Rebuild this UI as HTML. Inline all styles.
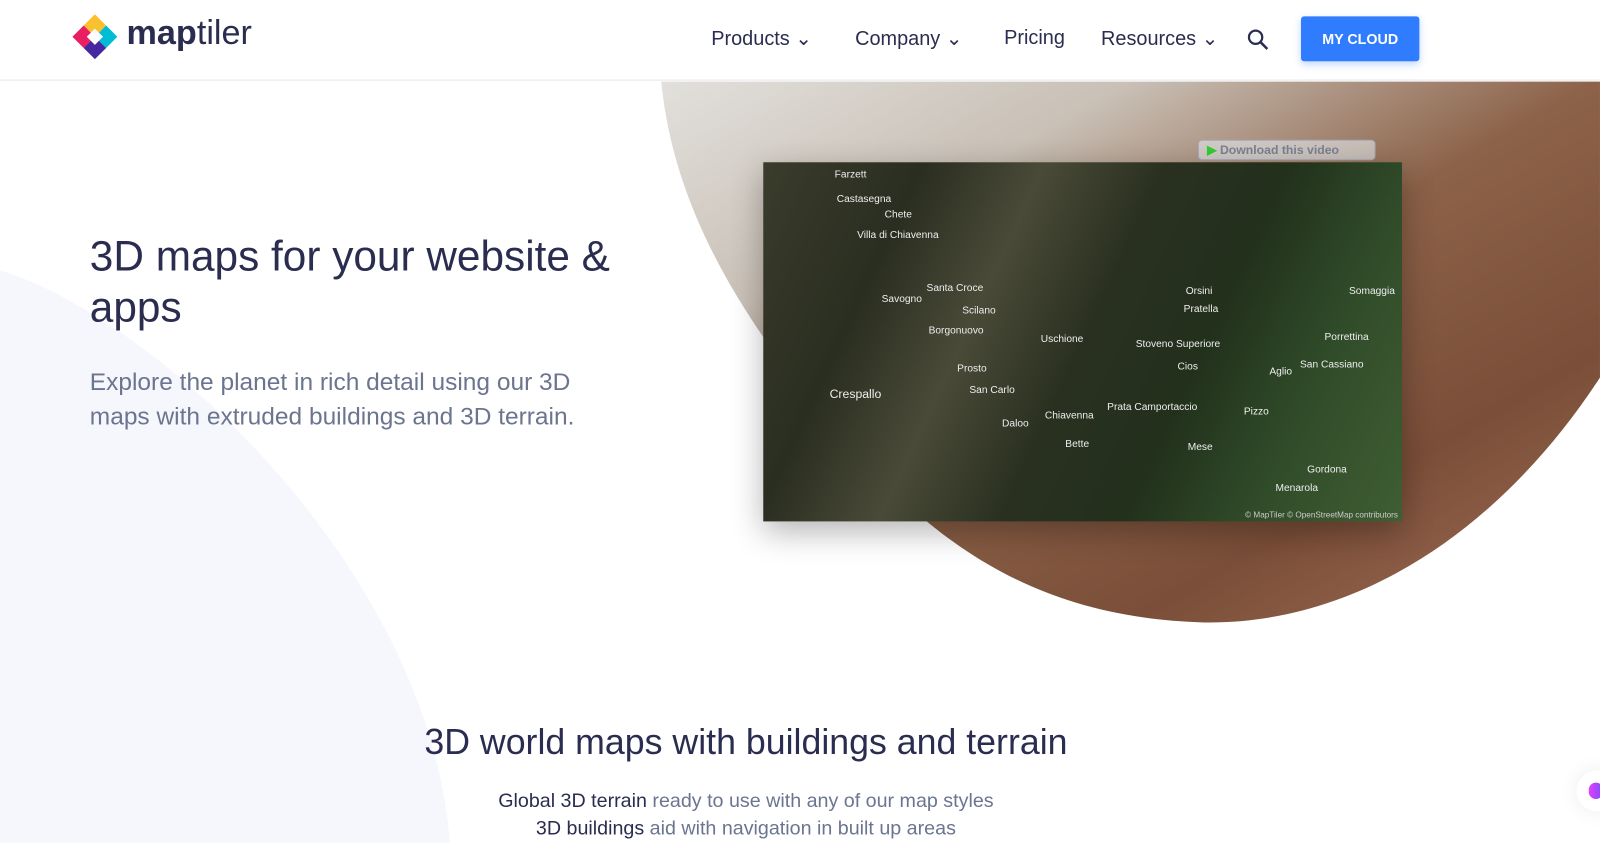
<!DOCTYPE html>
<html><head><meta charset="utf-8"><style>
body{margin:0;width:1600px;height:843px;overflow:hidden;background:#fff;font-family:"Liberation Sans",sans-serif;position:relative}
#w{position:absolute;left:0;top:0;width:1568px;height:826px;transform:scale(1.0204);transform-origin:0 0}
.hdr{position:absolute;left:0;top:0;width:1568px;height:78px;border-bottom:1px solid #e3e6ee;background:#fff;z-index:5}
.nav{position:absolute;top:26px;font-size:19.5px;color:#2a2d4f}
.btn{position:absolute;left:1275px;top:16px;width:116px;height:44px;background:#2f7cff;border-radius:3px;color:#fff;font-weight:bold;font-size:14px;line-height:44px;text-align:center;box-shadow:0 3px 8px rgba(47,124,255,.3)}
h1{position:absolute;left:88px;top:226px;margin:0;font-weight:normal;font-size:41.5px;line-height:50px;color:#2a2d4f;width:580px}
.p{position:absolute;left:88px;top:358px;font-size:24px;line-height:34px;color:#6b7590;width:520px}
h2{position:absolute;left:0;width:1462px;top:708px;margin:0;text-align:center;font-weight:normal;font-size:35px;color:#2a2d4f}
.l{position:absolute;width:1462px;text-align:center;font-size:19.3px;color:#6b7590}
.l b{color:#2a2d4f;font-weight:normal}
.card{position:absolute;left:748px;top:159px;width:626px;height:352px;background:linear-gradient(115deg,#3a3c2c 0%,#2a2e20 20%,#4a4a38 35%,#2a3020 50%,#22301c 65%,#2f4a28 80%,#3f5e34 100%);box-shadow:0 10px 30px rgba(0,0,0,.3);font-size:10px;color:#eee}
.card span{position:absolute}
</style></head><body><div id="w">
<svg width="1568" height="826" style="position:absolute;left:0;top:0">
<defs><linearGradient id="t" x1="0" y1="0" x2="1" y2="1">
<stop offset="0" stop-color="#e2e0dc"/><stop offset=".25" stop-color="#c9c0b6"/><stop offset=".5" stop-color="#8c6248"/><stop offset=".75" stop-color="#7a4e38"/><stop offset="1" stop-color="#a27058"/></linearGradient></defs>
<path d="M0 265 C150 310 430 560 442 843 L0 843 Z" fill="#f5f7fd"/>
<path d="M648 80 L1568 80 L1568 370 C1470 520 1330 612 1180 610 C1000 605 900 520 800 400 C720 300 660 200 648 80 Z" fill="url(#t)"/>
</svg>
<div class="hdr">
<svg style="position:absolute;left:71px;top:14px" width="44" height="44" viewBox="0 0 44 44">
<path d="M22 0 L33 11 L22 22 L11 11Z" fill="#fbc02d"/><path d="M11 11 L22 22 L11 33 L0 22Z" fill="#e91e63"/><path d="M33 11 L44 22 L33 33 L22 22Z" fill="#00bcd4"/><path d="M22 22 L33 33 L22 44 L11 33Z" fill="#4527a0"/>
<path d="M11 11 L22 0 L16 6Z" fill="#ff5722"/><path d="M22 22 L11 33 L18 26Z" fill="#7e22e0"/>
<path d="M22 14 L30 22 L22 30 L14 22Z" fill="#fff"/></svg>
<div style="position:absolute;left:124px;top:14px;font-size:33.5px;color:#2a2d4f"><b>map</b>tiler</div>
<div class="nav" style="left:697px">Products ⌄</div>
<div class="nav" style="left:838px">Company ⌄</div>
<div class="nav" style="left:984px">Pricing</div>
<div class="nav" style="left:1079px">Resources ⌄</div>
<svg style="position:absolute;left:1222px;top:28px" width="22" height="22"><circle cx="8.5" cy="8.5" r="6.5" stroke="#2a2d4f" stroke-width="2.2" fill="none"/><path d="M13 13 L20 20" stroke="#2a2d4f" stroke-width="2.5"/></svg>
<div class="btn">MY CLOUD</div>
</div>
<div style="position:absolute;left:1174px;top:137px;width:172px;height:18px;border:1px solid #aab;border-radius:4px;background:rgba(230,235,240,.6);font-size:12px;font-weight:bold;color:#7a8090;line-height:18px"><span style="color:#3c3;margin-left:8px">▶</span> Download this video</div>
<h1>3D maps for your website &amp; apps</h1>
<div class="p">Explore the planet in rich detail using our 3D maps with extruded buildings and 3D terrain.</div>
<div class="card">
<span style="left:70px;top:7px">Farzett</span><span style="left:72px;top:31px">Castasegna</span><span style="left:119px;top:46px">Chete</span><span style="left:92px;top:66px">Villa di Chiavenna</span>
<span style="left:160px;top:118px">Santa Croce</span><span style="left:116px;top:129px">Savogno</span><span style="left:195px;top:140px">Scilano</span><span style="left:162px;top:160px">Borgonuovo</span>
<span style="left:272px;top:168px">Uschione</span><span style="left:414px;top:121px">Orsini</span><span style="left:412px;top:139px">Pratella</span><span style="left:365px;top:173px">Stoveno Superiore</span><span style="left:406px;top:195px">Cios</span>
<span style="left:190px;top:197px">Prosto</span><span style="left:65px;top:220px;font-size:12px">Crespallo</span><span style="left:202px;top:218px">San Carlo</span><span style="left:276px;top:243px">Chiavenna</span><span style="left:337px;top:235px">Prata Camportaccio</span>
<span style="left:234px;top:251px">Daloo</span><span style="left:296px;top:271px">Bette</span><span style="left:416px;top:274px">Mese</span><span style="left:496px;top:200px">Aglio</span><span style="left:471px;top:239px">Pizzo</span>
<span style="left:526px;top:193px">San Cassiano</span><span style="left:550px;top:166px">Porrettina</span><span style="left:574px;top:121px">Somaggia</span><span style="left:533px;top:296px">Gordona</span><span style="left:502px;top:314px">Menarola</span>
<span style="right:4px;bottom:2px;font-size:8px;color:#ccc">© MapTiler © OpenStreetMap contributors</span>
</div>
<h2>3D world maps with buildings and terrain</h2>
<div class="l" style="top:775px"><b>Global 3D terrain</b> ready to use with any of our map styles</div>
<div class="l" style="top:802px"><b>3D buildings</b> aid with navigation in built up areas</div>
<div style="position:absolute;left:1545px;top:755px;width:40px;height:40px;border-radius:50%;background:#fff;box-shadow:0 0 20px rgba(0,0,0,.08)"><div style="position:absolute;left:12px;top:12px;width:14px;height:16px;border-radius:7px;background:linear-gradient(90deg,#e040fb,#7c4dff)"></div></div>
</div></body></html>
